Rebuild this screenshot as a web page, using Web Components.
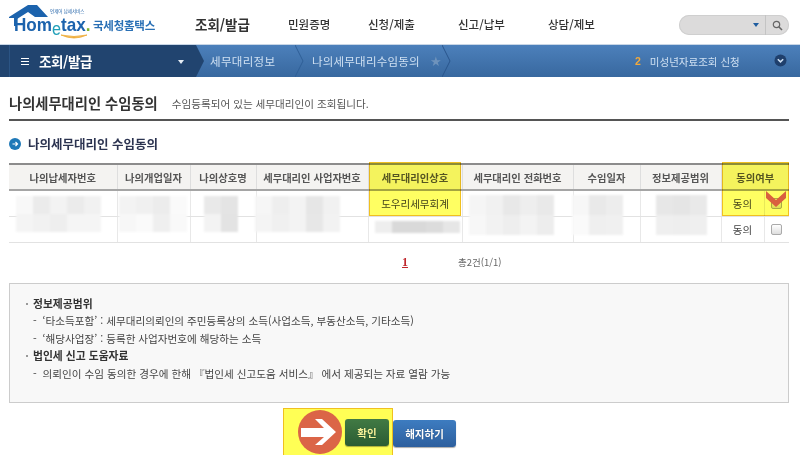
<!DOCTYPE html>
<html lang="ko">
<head>
<meta charset="utf-8">
<title>나의세무대리인 수임동의</title>
<style>
  html, body { margin: 0; padding: 0; background: #fff; }
  body { font-family: "Noto Sans CJK KR", "Liberation Sans", sans-serif; color: #333; width: 800px; height: 455px; overflow: hidden; }
</style>
</head>
<body>
<tax-header></tax-header>
<tax-subnav></tax-subnav>
<page-title heading="나의세무대리인 수임동의" desc="수임등록되어 있는 세무대리인이 조회됩니다."></page-title>
<section-head>나의세무대리인 수임동의</section-head>
<consent-table></consent-table>
<tax-pager></tax-pager>
<info-box>
  <h4>정보제공범위</h4>
  <p>-&nbsp;&nbsp;‘타소득포함’ : 세무대리의뢰인의 주민등록상의 소득(사업소득, 부동산소득, 기타소득)</p>
  <p>-&nbsp;&nbsp;‘해당사업장’ : 등록한 사업자번호에 해당하는 소득</p>
  <h4>법인세 신고 도움자료</h4>
  <p>-&nbsp;&nbsp;의뢰인이 수임 동의한 경우에 한해 『법인세 신고도움 서비스』 에서 제공되는 자료 열람 가능</p>
</info-box>
<action-bar></action-bar>

<script>
// small helper so every element doesn't repeat the same constructor lines
class Base extends HTMLElement {
  constructor() {
    super();
    this.attachShadow({ mode: 'open' });
    this.shadowRoot.innerHTML = this.markup();
  }
}

class TaxHeader extends Base {
  markup() { return `
<style>
  :host { display: flex; height: 44px; align-items: flex-start; background: #fff; position: relative; }
  .logo { position: relative; width: 195px; height: 44px; flex: none; }
  .logo svg { position: absolute; left: 8px; top: 4px; }
  .tiny { position: absolute; left: 50px; top: 9px; font-size: 4.5px; line-height: 5px; color: #1d5fa6; white-space: nowrap; }
  .word { position: absolute; left: 14px; top: 18px; font: bold 19px/14px "Liberation Sans", sans-serif; color: #1c63ad; white-space: nowrap; transform: scaleX(.9); transform-origin: left top; }
  .word i { font-style: normal; font-weight: normal; font-size: 18px; color: #1f9fb8; position: relative; top: 4px; }
  .word b { color: #7db52c; }
  .kr { position: absolute; left: 93px; top: 17px; font-size: 11.5px; line-height: 16px; font-weight: 700; color: #2a70b5; letter-spacing: -.25px; white-space: nowrap; }
  nav { display: flex; padding-top: 14px; font-size: 11.5px; line-height: 20px; font-weight: 500; color: #333; }
  nav span { white-space: nowrap; }
  nav .big { font-size: 13.5px; width: 93px; font-weight: 700; }
  nav .a { width: 80px; }
  nav .b { width: 90px; }
  .search { position: absolute; left: 679px; top: 15px; width: 110px; height: 20px; border-radius: 10px; background: #dcdbdb; box-shadow: inset 0 0 0 1px #cfcfcf; display: flex; align-items: center; justify-content: flex-end; }
  .search .caret { width: 0; height: 0; border: 3px solid transparent; border-top: 4px solid #1f5da0; border-bottom: 0; margin-right: 6px; }
  .search .mag { width: 23px; height: 20px; border-left: 1px solid #c4c4c4; display: flex; align-items: center; justify-content: center; }
</style>
<div class="logo">
  <svg width="44" height="24" viewBox="0 0 44 24"><path d="M1 13 L20 1 H29 L40 13 H27 L20 8 L9 15 V22 H6 V14 H1 Z" fill="#1c63ad"/></svg>
  <span class="tiny">언제어 납세서비스</span>
  <span class="word">Hom<i>e</i>tax<b>.</b></span>
  <svg width="28" height="6" viewBox="0 0 28 6" style="left:60px;top:34px"><path d="M1 1 Q14 7 27 1 Q14 4 1 1 Z" fill="#eeaa33" stroke="#eeaa33" stroke-width=".8"/></svg>
  <span class="kr">국세청홈택스</span>
</div>
<nav>
  <span class="big">조회/발급</span>
  <span class="a">민원증명</span>
  <span class="b">신청/제출</span>
  <span class="b">신고/납부</span>
  <span>상담/제보</span>
</nav>
<div class="search"><span class="caret"></span><span class="mag">
  <svg width="11" height="11" viewBox="0 0 11 11"><circle cx="4.5" cy="4.5" r="3.2" fill="none" stroke="#666" stroke-width="1.2"/><path d="M7 7 L10 10" stroke="#666" stroke-width="1.6"/></svg>
</span></div>`; }
}

class TaxSubnav extends Base {
  markup() { return `
<style>
  :host { display: flex; height: 33px; align-items: stretch; background: linear-gradient(#4c80bb, #38689f); border-top: 1px solid #c8d6e6; box-sizing: border-box; position: relative; color: #cfe0f2; font-size: 11.5px; }
  .menu { width: 187px; flex: none; background: #21446f; display: flex; align-items: center; color: #fff; position: relative; box-sizing: border-box; border-left: 1px solid #2b5484; margin-left: 9px; }
  :host::before { content: ""; position: absolute; left: 0; top: 0; bottom: 0; width: 9px; background: #21446f; }
  .menu::after { content: ""; position: absolute; left: 100%; top: 0; border-left: 8px solid #21446f; border-top: 16px solid transparent; border-bottom: 16px solid transparent; }
  .burger { margin-left: 11px; width: 8px; height: 7px; border-top: 1px solid #fff; border-bottom: 1px solid #fff; position: relative; box-sizing: border-box; }
  .burger::after { content: ""; position: absolute; left: 0; right: 0; top: 2px; height: 1px; background: #fff; }
  .menu b { margin-left: 10px; font-size: 13.5px; font-weight: 700; letter-spacing: -.4px; }
  .drop { position: absolute; left: 168px; top: 15px; border: 3px solid transparent; border-top: 4px solid #e6edf5; border-bottom: 0; }
  .crumbs { display: flex; align-items: center; flex: 1; }
  .crumb { display: flex; align-items: center; position: relative; white-space: nowrap; height: 100%; }
  .sep { flex: none; }
  .one { margin-left: 14px; width: 85px; letter-spacing: .3px; }
  .two { margin-left: 8px; width: 119px; letter-spacing: .2px; }
  .star { color: #6f93bc; font-size: 13px; line-height: 1; font-family: "DejaVu Sans", sans-serif; margin-left: -1px; width: 12px; }
  .right { position: absolute; left: 635px; top: 0; height: 100%; display: flex; align-items: center; font-size: 10.5px; white-space: nowrap; }
  .right em { font-style: normal; font-weight: 700; color: #f2a93b; margin-right: 9px; font-family: "Liberation Sans", sans-serif; }
  .toggle { position: absolute; left: 774px; top: 9px; }
</style>
<div class="menu"><span class="burger"></span><b>조회/발급</b><span class="drop"></span></div>
<div class="crumbs">
  <span class="crumb one">세무대리정보</span>
  <svg class="sep" width="9" height="32" viewBox="0 0 9 32"><path d="M0 0 L8 16 L0 32" fill="none" stroke="#2f5f97"/></svg>
  <span class="crumb two">나의세무대리수임동의</span>
  <span class="star">★</span>
  <svg class="sep" width="9" height="32" viewBox="0 0 9 32"><path d="M0 0 L8 16 L0 32" fill="none" stroke="#2a568c"/></svg>
</div>
<div class="right"><em>2</em>미성년자료조회 신청</div>
<svg class="toggle" width="13" height="13" viewBox="0 0 13 13"><circle cx="6.5" cy="6.5" r="6" fill="#1f3f6c"/><path d="M3.8 5.2 L6.5 7.9 L9.2 5.2" fill="none" stroke="#cfe0f2" stroke-width="1.5"/></svg>`; }
}

class PageTitle extends Base {
  markup() { return `
<style>
  :host { display: flex; align-items: center; margin: 0 11px 0 9px; height: 44px; box-sizing: border-box; padding-top: 17px; padding-bottom: 7px; border-bottom: 2px solid #555; white-space: nowrap; }
  h1 { margin: 0; font-size: 14.3px; line-height: 20px; font-weight: 700; color: #333; }
  span { margin-left: 14px; font-size: 10.6px; color: #555; }
</style>
<h1>${this.getAttribute('heading')}</h1><span>${this.getAttribute('desc')}</span>`; }
}

class SectionHead extends Base {
  markup() { return `
<style>
  :host { display: flex; align-items: center; gap: 7px; margin-left: 9px; height: 42px; box-sizing: border-box; padding-top: 3px; font-size: 12.5px; font-weight: 700; color: #2b3350; }
</style>
<svg width="12" height="12" viewBox="0 0 12 12"><circle cx="6" cy="6" r="6" fill="#1f79b8"/><path d="M3.5 6 H8.5 M6.5 4 L8.5 6 L6.5 8" fill="none" stroke="#fff" stroke-width="1.2"/></svg>
<slot></slot>`; }
}

// grey pixel blocks that hide the private values, they run across both rows
class MosaicBlock extends Base {
  markup() {
    const shades = (this.getAttribute('shades') || '').split(' ');
    const cols = +this.getAttribute('cols');
    const cells = shades.map(s => `<i style="background:#${s}"></i>`).join('');
    return `
<style>
  :host { display: block; position: absolute; left: ${this.getAttribute('x')}px; top: ${this.getAttribute('y')}px; }
  div { display: grid; grid-template-columns: repeat(${cols}, 17px); grid-auto-rows: ${this.getAttribute('rh') || 18}px; filter: blur(.8px); }
</style>
<div>${cells}</div>`;
  }
}

class ConsentTable extends Base {
  markup() {
    const heads = ['나의납세자번호', '나의개업일자', '나의상호명', '세무대리인 사업자번호', '세무대리인상호', '세무대리인 전화번호', '수임일자', '정보제공범위'];
    const widths = [108, 73, 66, 112, 94, 111, 67, 81, 43, 25];
    return `
<style>
  :host { display: block; position: relative; margin: 0 11px 0 9px; width: 780px; }
  table { border-collapse: collapse; table-layout: fixed; width: 780px; font-size: 10.5px; color: #444; }
  th { height: 24px; padding: 0; background: #f4f3f1; border-top: 2px solid #8c8c8c; border-bottom: 2px solid #a5a5a5; border-left: 1px solid #dedede; font-weight: 700; color: #555; white-space: nowrap; font-size: 10.3px; }
  td { height: 25px; padding: 0; border-bottom: 1px solid #e2e2e2; border-left: 1px solid #e8e8e8; text-align: center; }
  tr > :first-child { border-left: 0; }
  .box { display: block; width: 9px; height: 9px; margin: auto; border: 1px solid #aaa; border-radius: 2px; background: linear-gradient(#fff, #ddd); }
  .mark { position: absolute; box-sizing: border-box; top: -1px; height: 54px; background: #ffff62; mix-blend-mode: multiply; border: 1px solid #f0c020; }
  .chev { position: absolute; left: 757px; top: 28px; }
</style>
<table>
  <colgroup>${widths.map(w => `<col style="width:${w}px">`).join('')}</colgroup>
  <tr>${heads.map(h => `<th>${h}</th>`).join('')}<th colspan="2">동의여부</th></tr>
  <tr><td></td><td></td><td></td><td></td><td>도우리세무회계</td><td></td><td></td><td></td><td>동의</td><td><span class="box"></span></td></tr>
  <tr><td></td><td></td><td></td><td></td><td></td><td></td><td></td><td></td><td>동의</td><td><span class="box"></span></td></tr>
</table>
<mosaic-block x="7" y="33" cols="5" shades="f8f8f8 ebebeb f3f3f3 ebebeb f1f1f1 f4f4f4 f1f1f1 eeeeee f5f5f5 f5f5f5"></mosaic-block>
<mosaic-block x="110" y="33" cols="4" shades="f3f3f3 f0f0f0 ececec fafafa f7f7f7 fafafa efefef f9f9f9"></mosaic-block>
<mosaic-block x="195" y="33" cols="2" shades="e9e9e9 e4e4e4 f3f3f3 e3e3e3"></mosaic-block>
<mosaic-block x="246" y="33" cols="5" shades="f6f6f6 eeeeee f3f3f3 e6e6e6 f1f1f1 f4f4f4 f0f0f0 f3f3f3 e7e7e7 f2f2f2"></mosaic-block>
<mosaic-block x="366" y="58" cols="5" rh="12" shades="eeeeee d9d9d9 d9d9d9 dcdcdc e6e6e6"></mosaic-block>
<mosaic-block x="460" y="32" cols="5" rh="20" shades="f5f5f5 f1f1f1 e8e8e8 eeeeee e9e9e9 f7f7f7 f2f2f2 eeeeee f3f3f3 ededed"></mosaic-block>
<mosaic-block x="563" y="32" cols="3" rh="20" shades="f7f7f7 e9e9e9 ededed fafafa efefef f0f0f0"></mosaic-block>
<mosaic-block x="647" y="32" cols="3" rh="20" shades="e7e7e7 e5e5e5 e9e9e9 efefef eeeeee efefef"></mosaic-block>
<span class="mark" style="left:360px;width:92px"></span>
<span class="mark" style="left:713px;width:67px"></span>
<svg class="chev" width="20" height="17" viewBox="0 0 20 17"><path d="M0 0 L10 9 L20 0 V7 L10 16 L0 7 Z" fill="#d9603f"/></svg>`;
  }
}

class TaxPager extends Base {
  markup() { return `
<style>
  :host { display: block; position: relative; height: 40px; }
  a { position: absolute; left: 402px; top: 11px; font: bold 12px/16px "Liberation Serif", serif; color: #c0272d; text-decoration: underline; }
  span { position: absolute; left: 458px; top: 12px; font-size: 9.5px; line-height: 14px; color: #666; }
</style>
<a>1</a><span>총2건(1/1)</span>`; }
}

class InfoBox extends Base {
  markup() { return `
<style>
  :host { display: block; box-sizing: border-box; margin-left: 9px; width: 780px; height: 120px; background: #f8f8f8; border: 1px solid #ccc; padding: 11px 0 0 23px; font-size: 10.6px; line-height: 17.4px; color: #444; }
  ::slotted(h4) { margin: 0; font-size: 10.8px; font-weight: 700; color: #333; position: relative; }
  ::slotted(h4)::before { content: ""; position: absolute; left: -7px; top: 8px; width: 2px; height: 2px; background: #999; }
  ::slotted(p) { margin: 0; }
</style>
<slot></slot>`; }
}

class ActionBar extends Base {
  markup() { return `
<style>
  :host { display: flex; align-items: flex-start; margin-top: 5px; padding-left: 283px; height: 48px; }
  .hi { box-sizing: border-box; width: 110px; height: 48px; background: #ffff55; border: 1px solid #f0c020; display: flex; align-items: center; padding-left: 14px; gap: 3px; }
  button { font: 700 10.5px "Noto Sans CJK KR", sans-serif; color: #fff; height: 27px; border: 0; border-radius: 3px; padding: 0; text-shadow: 0 0 1px #0006; }
  .ok { width: 44px; background: linear-gradient(#417a44, #2b5c33); color: #f7f39a; box-shadow: 0 1px 1px #0005; }
  .no { width: 63px; margin-top: 12px; background: linear-gradient(#3d7cc0, #2d5f9e); box-shadow: 0 1px 1px #0005; }
</style>
<div class="hi">
  <svg width="44" height="44" viewBox="0 0 44 44"><circle cx="22" cy="22" r="22" fill="#db6547"/><path d="M3 18 H26 L17 9 H24 L38 22 L24 35 H17 L26 27 H3 Z" fill="#fff"/></svg>
  <button class="ok">확인</button>
</div>
<button class="no">해지하기</button>`; }
}

customElements.define('tax-header', TaxHeader);
customElements.define('tax-subnav', TaxSubnav);
customElements.define('page-title', PageTitle);
customElements.define('section-head', SectionHead);
customElements.define('mosaic-block', MosaicBlock);
customElements.define('consent-table', ConsentTable);
customElements.define('tax-pager', TaxPager);
customElements.define('info-box', InfoBox);
customElements.define('action-bar', ActionBar);
</script>
</body>
</html>
